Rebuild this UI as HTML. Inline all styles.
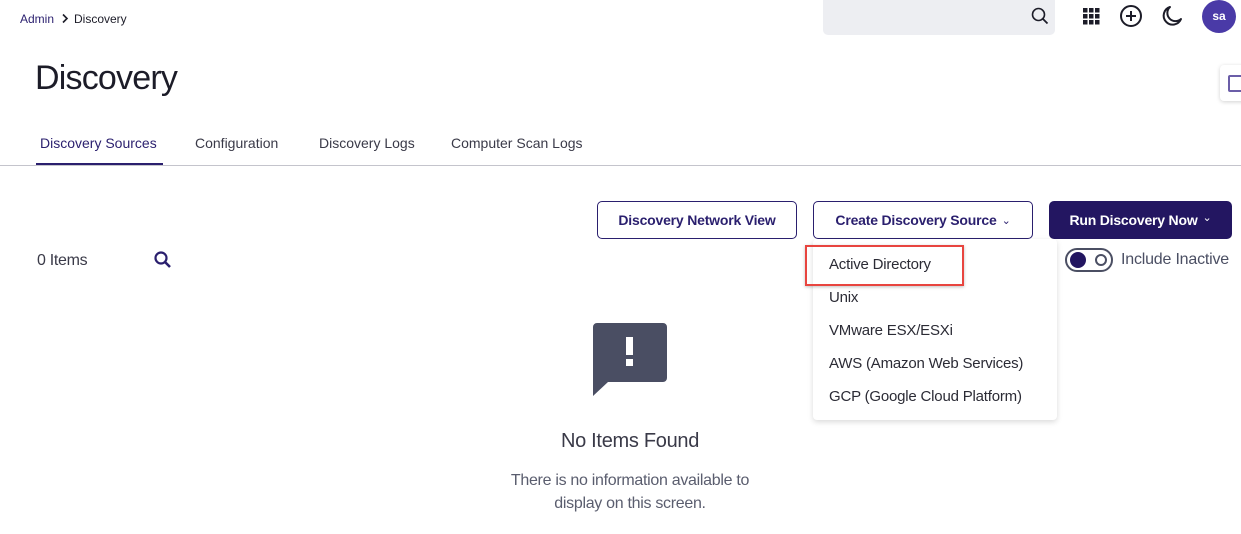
<!DOCTYPE html>
<html><head><meta charset="utf-8"><style>
*{margin:0;padding:0;box-sizing:border-box}
body{width:1241px;height:534px;background:#fff;font-family:"Liberation Sans",sans-serif;position:relative;overflow:hidden;color:#1c1c28}
.a{position:absolute;white-space:nowrap}
.btn{position:absolute;height:38px;border:1px solid #2a1f6e;border-radius:5px;color:#2a1f6e;font-weight:bold;font-size:14px;display:flex;align-items:center;justify-content:center;letter-spacing:-0.2px}
.mi{position:absolute;left:829px;font-size:15px;color:#2b2b35;letter-spacing:-0.2px}
</style></head><body>
<div class="a" style="left:20px;top:12px;font-size:12px;color:#2a1f6e">Admin</div>
<svg class="a" style="left:60px;top:13px" width="10" height="11" viewBox="0 0 10 11"><path d="M3 1.5 L7 5.5 L3 9.5" fill="none" stroke="#1c1c28" stroke-width="1.6"/></svg>
<div class="a" style="left:74px;top:12px;font-size:12px;color:#1c1c28">Discovery</div>

<div class="a" style="left:823px;top:0;width:232px;height:35px;background:#edeef2;border-radius:0 0 5px 5px"></div>
<svg class="a" style="left:1031px;top:7px" width="18" height="18" viewBox="0 0 18 18"><circle cx="7.5" cy="7.5" r="6" fill="none" stroke="#1c1c28" stroke-width="1.6"/><path d="M12 12 L16.5 16.5" stroke="#1c1c28" stroke-width="1.8"/></svg>
<svg class="a" style="left:1083px;top:8px" width="17" height="17" viewBox="0 0 17 17" fill="#1c1c28"><rect x="0" y="0" width="4.5" height="4.5"/><rect x="6" y="0" width="4.5" height="4.5"/><rect x="12" y="0" width="4.5" height="4.5"/><rect x="0" y="6" width="4.5" height="4.5"/><rect x="6" y="6" width="4.5" height="4.5"/><rect x="12" y="6" width="4.5" height="4.5"/><rect x="0" y="12" width="4.5" height="4.5"/><rect x="6" y="12" width="4.5" height="4.5"/><rect x="12" y="12" width="4.5" height="4.5"/></svg>
<svg class="a" style="left:1119px;top:4px" width="24" height="24" viewBox="0 0 24 24"><circle cx="12" cy="12" r="10" fill="none" stroke="#1c1c28" stroke-width="2"/><path d="M12 7v10M7 12h10" stroke="#1c1c28" stroke-width="2"/></svg>
<svg class="a" style="left:1160px;top:4px" width="24" height="24" viewBox="0 0 24 24"><path d="M10 3 A9 9 0 1 0 21 15 A7 7 0 0 1 10 3 Z" fill="none" stroke="#1c1c28" stroke-width="2" stroke-linejoin="round"/></svg>
<div class="a" style="left:1202px;top:0;width:34px;height:33px;border-radius:50%;background:#4a3aa7;color:#fff;font-size:12px;font-weight:bold;text-align:center;line-height:33px">sa</div>
<div class="a" style="left:1220px;top:65px;width:30px;height:36px;background:#fff;border-radius:4px;box-shadow:0 1px 4px rgba(0,0,0,.18)"></div>
<div class="a" style="left:1228px;top:75px;width:16px;height:17px;border:2px solid #6b5ea8;border-radius:2px"></div>

<div class="a" style="left:35px;top:59px;font-size:34px;letter-spacing:-0.8px;color:#1c1c28">Discovery</div>

<div class="a" style="left:40px;top:135px;font-size:14px;color:#2a1f6e">Discovery Sources</div>
<div class="a" style="left:195px;top:135px;font-size:14px;color:#3a3a48">Configuration</div>
<div class="a" style="left:319px;top:135px;font-size:14px;color:#3a3a48">Discovery Logs</div>
<div class="a" style="left:451px;top:135px;font-size:14px;color:#3a3a48">Computer Scan Logs</div>
<div class="a" style="left:0;top:165px;width:1241px;height:1px;background:#c4c4cc"></div>
<div class="a" style="left:36px;top:163px;width:127px;height:2px;background:#2a1f6e"></div>

<div class="btn" style="left:597px;top:201px;width:200px">Discovery Network View</div>
<div class="btn" style="left:813px;top:201px;width:220px">Create Discovery Source <span style="font-weight:normal;font-size:11px;margin-left:5px">&#8964;</span></div>
<div class="btn" style="left:1049px;top:201px;width:183px;background:#231661;border-color:#231661;color:#fff">Run Discovery Now <span style="font-weight:normal;font-size:11px;margin-left:5px;position:relative;top:-3px">&#8964;</span></div>

<div class="a" style="left:37px;top:252px;font-size:16px;color:#3a3a48;letter-spacing:-0.3px">0 Items</div>
<svg class="a" style="left:153px;top:250px" width="20" height="20" viewBox="0 0 20 20"><circle cx="8" cy="8" r="5.5" fill="none" stroke="#2a1f6e" stroke-width="2.2"/><path d="M12 12 L17 17" stroke="#2a1f6e" stroke-width="2.6"/></svg>

<div class="a" style="left:1065px;top:248px;width:48px;height:24px;border:2px solid #4b4f63;border-radius:12px"></div>
<div class="a" style="left:1070px;top:252px;width:16px;height:16px;border-radius:50%;background:#231661"></div>
<div class="a" style="left:1095px;top:254px;width:12px;height:12px;border-radius:50%;border:2px solid #4b4f63"></div>
<div class="a" style="left:1121px;top:251px;font-size:16px;color:#4b4f63;letter-spacing:-0.2px">Include Inactive</div>

<div class="a" style="left:813px;top:239px;width:244px;height:181px;background:#fff;border-radius:4px;box-shadow:0 2px 6px rgba(0,0,0,.15)"></div>
<div class="a" style="left:805px;top:245px;width:159px;height:41px;border:2px solid #e8453f;box-shadow:0 1px 3px rgba(0,0,0,.25)"></div>
<div class="mi" style="top:256px">Active Directory</div>
<div class="mi" style="top:289px">Unix</div>
<div class="mi" style="top:322px">VMware ESX/ESXi</div>
<div class="mi" style="top:355px">AWS (Amazon Web Services)</div>
<div class="mi" style="top:388px">GCP (Google Cloud Platform)</div>

<svg class="a" style="left:593px;top:323px" width="74" height="74" viewBox="0 0 74 74"><path d="M4 0 H70 A4 4 0 0 1 74 4 V55 A4 4 0 0 1 70 59 H15 L0 73 V4 A4 4 0 0 1 4 0 Z" fill="#4a4e63"/><rect x="33" y="14" width="7" height="18" fill="#fff"/><rect x="33" y="36" width="7" height="7" fill="#fff"/></svg>
<div class="a" style="left:0;width:1260px;text-align:center;top:430px;font-size:20px;color:#3a3a48;letter-spacing:-0.3px">No Items Found</div>
<div class="a" style="left:0;width:1260px;text-align:center;top:469px;font-size:16px;line-height:23px;color:#5a5d6e;letter-spacing:-0.3px">There is no information available to<br>display on this screen.</div>
</body></html>
